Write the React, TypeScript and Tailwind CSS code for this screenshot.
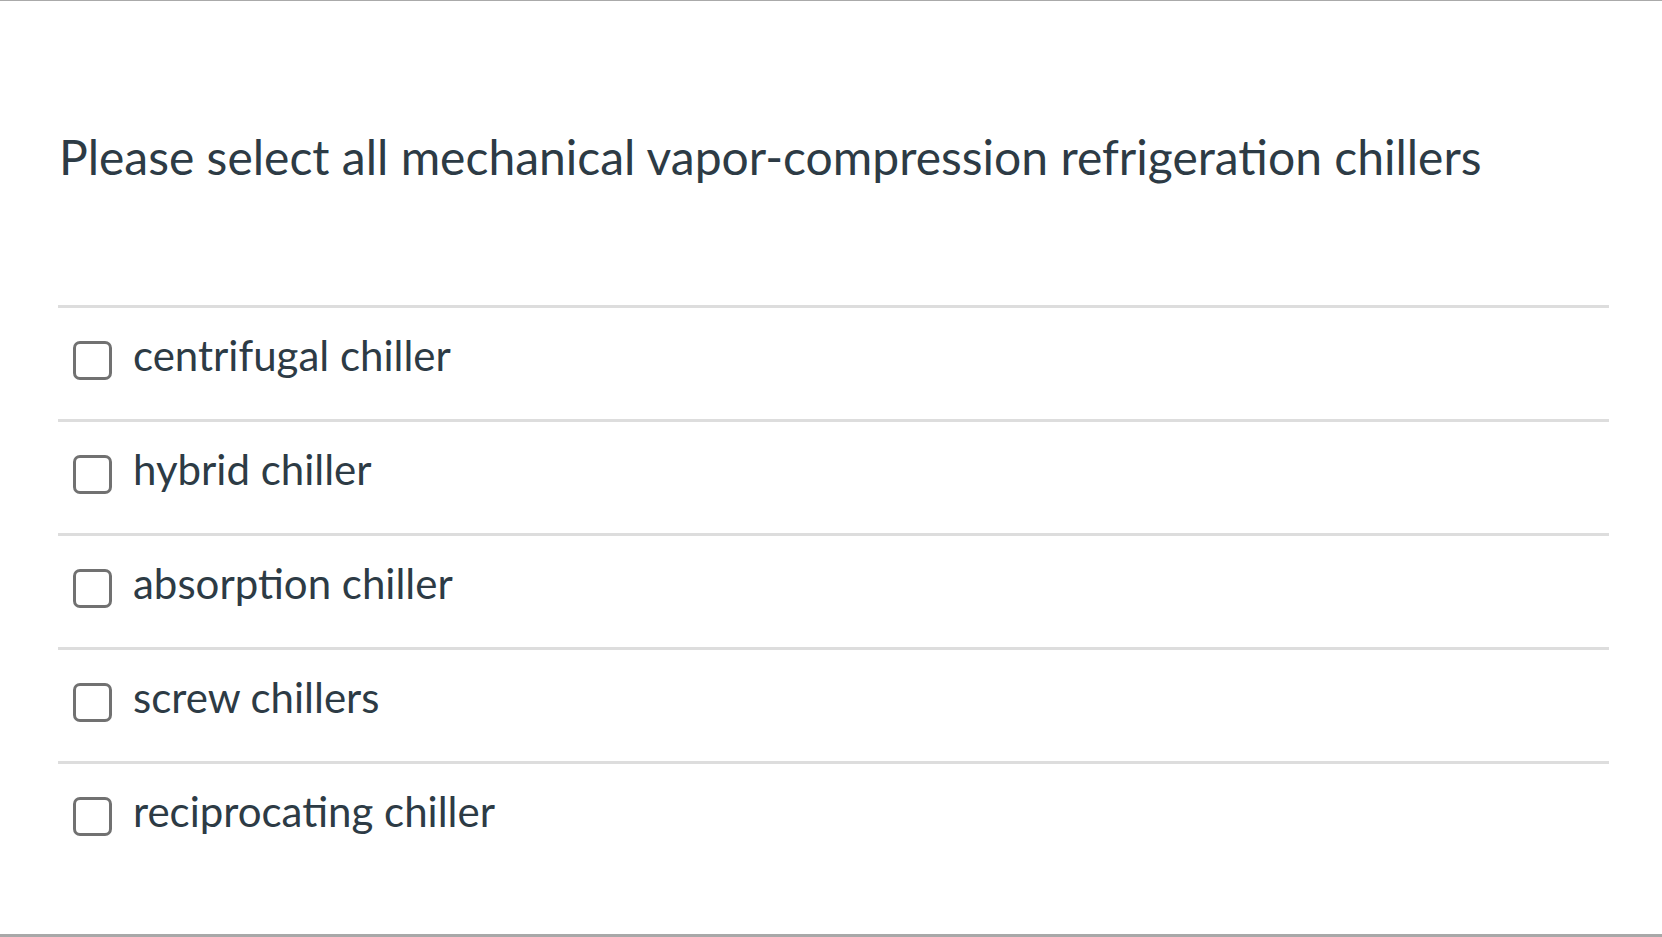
import React from 'react';

const options = [
  'centrifugal chiller',
  'hybrid chiller',
  'absorption chiller',
  'screw chillers',
  'reciprocating chiller',
];

export default function App() {
  return (
    <div className="h-[937px] overflow-hidden border-t border-b-[3px] border-t-[#aaaaaa] border-b-[#a8a8a8] bg-white font-['Lato','Liberation_Sans',sans-serif] text-[#2d3b45]">
      <div className="pl-[58px] pr-[53px]">
        {/* question text */}
        <h1 className="pt-[127px] pl-[1px] text-[48px] leading-[1.2] font-normal">
          Please select all mechanical vapor-compression refrigeration chillers
        </h1>

        {/* answers */}
        <ul className="mt-[119px]">
          {options.map((opt) => (
            <li
              key={opt}
              className="box-border flex h-[114px] items-start gap-[21px] border-t-[3px] border-[#dddddd] pt-[22px] pl-[15px]"
            >
              <span className="mt-[11px] block h-[39px] w-[39px] shrink-0 rounded-[7px] border-[3px] border-[#717171] bg-white" />
              <span className="text-[42px] leading-[1.2]">{opt}</span>
            </li>
          ))}
        </ul>
      </div>
    </div>
  );
}
